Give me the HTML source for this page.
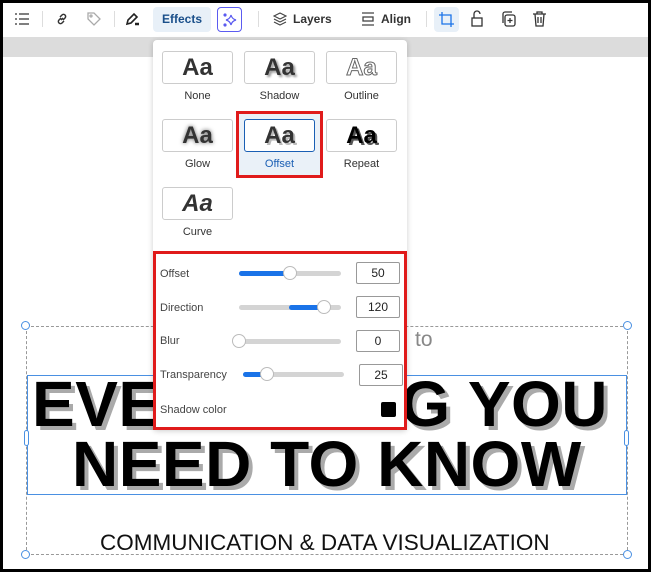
<!DOCTYPE html>
<html><head><style>
*{box-sizing:border-box;margin:0;padding:0}
body{width:651px;height:572px;overflow:hidden;background:#000;font-family:"Liberation Sans",sans-serif;position:relative}
.frame{position:absolute;left:3px;top:3px;width:645px;height:566px;background:#fff;overflow:hidden}
.tb{position:absolute;left:0;top:0;width:645px;height:34px;background:#fff}
.band{position:absolute;left:0;top:34px;width:645px;height:20px;background:#dcdcdc}
.ab{position:absolute}
.sep{position:absolute;top:8px;width:1px;height:16px;background:#ddd}
.tile{position:absolute;width:71px;height:33px;border:1px solid #ccc;border-radius:3px;font-weight:bold;font-size:24px;text-align:center;line-height:31px;color:#333}
.lab{position:absolute;width:71px;text-align:center;font-size:11px;color:#333}
.sl{position:absolute;height:5px;background:#d4d4d4;border-radius:3px}
.fill{position:absolute;height:5px;background:#1a73e8;border-radius:3px}
.knob{position:absolute;width:14px;height:14px;border-radius:50%;background:#fff;border:1px solid #bbb}
.inp{position:absolute;width:44px;height:22px;border:1px solid #999;border-radius:2px;font-size:12px;text-align:center;line-height:20px;color:#222}
.sll{position:absolute;left:7px;font-size:11px;color:#444}
.h{position:absolute;font-weight:900;font-size:64px;color:#000;text-shadow:4px 4px 0 #aaa;letter-spacing:0.5px;white-space:nowrap;font-family:"Liberation Sans",sans-serif}
.hd{position:absolute;width:9px;height:9px;border-radius:50%;border:1.5px solid #4a90e2;background:#fff}
</style></head><body>
<div class="frame">
<div class="tb">
 <svg class="ab" style="left:12px;top:10px" width="14" height="12" viewBox="0 0 14 12" stroke="#555" stroke-width="1.4"><path d="M0 1h2M4 1h10M0 6h2M4 6h10M0 11h2M4 11h10"/></svg>
 <div class="sep" style="left:39px"></div>
 <svg class="ab" style="left:52px;top:9px" width="14" height="14" viewBox="0 0 14 14" fill="none" stroke="#333" stroke-width="1.5"><path d="M6 8l2-2M5 5l2-2a2 2 0 0 1 3 3l-2 2M9 9l-2 2a2 2 0 0 1-3-3l2-2"/></svg>
 <svg class="ab" style="left:83px;top:8px" width="16" height="16" viewBox="0 0 16 16" fill="none" stroke="#aaa" stroke-width="1.3"><path d="M2 2h6l6 6-6 6-6-6z"/><circle cx="5" cy="5" r="1"/></svg>
 <div class="sep" style="left:111px"></div>
 <svg class="ab" style="left:122px;top:9px" width="16" height="14" viewBox="0 0 16 14" fill="none" stroke="#222" stroke-width="1.6"><path d="M2 12l1-4 6-6 3 3-6 6z"/><path d="M10 12h4" stroke-width="2.5"/></svg>
 <div class="ab" style="left:150px;top:4px;width:58px;height:25px;background:#e8f0f8;border-radius:4px;color:#1a4f8a;font-size:12px;font-weight:bold;line-height:25px;text-align:center">Effects</div>
 <div class="ab" style="left:214px;top:4px;width:25px;height:25px;border:1.5px solid #5b5bf0;border-radius:4px"></div>
 <svg class="ab" style="left:219px;top:9px" width="16" height="16" viewBox="0 0 16 16" fill="none" stroke="#5b5bf0" stroke-width="1.2"><path d="M9 3q1 4 5 5q-4 1-5 5q-1-4-5-5q4-1 5-5z"/><circle cx="3" cy="3" r="1" fill="#5b5bf0"/><circle cx="3" cy="13" r="1" fill="#5b5bf0"/></svg>
 <div class="sep" style="left:255px"></div>
 <svg class="ab" style="left:270px;top:9px" width="14" height="14" viewBox="0 0 14 14" fill="none" stroke="#444" stroke-width="1.2"><path d="M7 1l6 3-6 3-6-3z M1 7l6 3 6-3 M1 10l6 3 6-3"/></svg>
 <div class="ab" style="left:290px;top:9px;font-size:12px;color:#333;font-weight:bold">Layers</div>
 <svg class="ab" style="left:358px;top:9px" width="14" height="14" viewBox="0 0 14 14" fill="none" stroke="#444" stroke-width="1.3"><path d="M1 1h12M1 13h12"/><rect x="2" y="5" width="10" height="4"/></svg>
 <div class="ab" style="left:378px;top:9px;font-size:12px;color:#333;font-weight:bold">Align</div>
 <div class="sep" style="left:423px"></div>
 <div class="ab" style="left:431px;top:4px;width:25px;height:25px;background:#e8f0f8;border-radius:4px"></div>
 <svg class="ab" style="left:436px;top:9px" width="15" height="15" viewBox="0 0 15 15" fill="none" stroke="#1a73e8" stroke-width="1.3"><path d="M3 0v12h12M0 3h12v12"/></svg>
 <svg class="ab" style="left:468px;top:7px" width="12" height="17" viewBox="0 0 12 17" fill="none" stroke="#333" stroke-width="1.3"><rect x="1" y="8" width="10" height="8"/><path d="M3 8V4a3 3 0 0 1 6 0"/></svg>
 <svg class="ab" style="left:498px;top:8px" width="15" height="16" viewBox="0 0 15 16" fill="none" stroke="#333" stroke-width="1.3"><rect x="4" y="4" width="10" height="11" rx="2"/><path d="M2 12V3a2 2 0 0 1 2-2h7M9 7v5M6.5 9.5h5"/></svg>
 <svg class="ab" style="left:530px;top:8px" width="13" height="16" viewBox="0 0 13 16" fill="none" stroke="#333" stroke-width="1.3"><path d="M0 3h13M4 3V1h5v2M2 3l1 12h7l1-12M5 6v6M8 6v6"/></svg>
</div>
<div class="band"></div>

<div class="ab" style="left:23px;top:323px;width:602px;height:229px;border:1px dashed #999"></div>
<div class="ab" style="left:24px;top:372px;width:600px;height:120px;border:1px solid #4a90e2"></div>
<div class="hd" style="left:18px;top:318px"></div><div class="hd" style="left:620px;top:318px"></div>
<div class="hd" style="left:18px;top:547px"></div><div class="hd" style="left:620px;top:547px"></div>
<div class="ab" style="left:21px;top:427px;width:5px;height:16px;border:1.5px solid #4a90e2;border-radius:3px;background:#fff"></div>
<div class="ab" style="left:621px;top:427px;width:5px;height:16px;border:1.5px solid #4a90e2;border-radius:3px;background:#fff"></div>
<div class="ab" style="left:412px;top:325px;font-size:21px;color:#888">to</div>
<div class="h" style="left:29px;top:364px">EVERYTHING YOU</div>
<div class="h" style="left:69px;top:424px">NEED TO KNOW</div>
<div class="ab" style="left:97px;top:527px;font-size:22.5px;color:#111">COMMUNICATION &amp; DATA VISUALIZATION</div>

<div class="ab" style="left:150px;top:37px;width:254px;height:390px;background:#fff;border-radius:4px;box-shadow:0 1px 6px rgba(0,0,0,.2)">
 <div class="tile" style="left:9px;top:11px">Aa</div><div class="lab" style="left:9px;top:50px">None</div>
 <div class="tile" style="left:91px;top:11px;text-shadow:2px 2px 2px #999">Aa</div><div class="lab" style="left:91px;top:50px">Shadow</div>
 <div class="tile" style="left:173px;top:11px;color:#fff;-webkit-text-stroke:1px #666">Aa</div><div class="lab" style="left:173px;top:50px">Outline</div>
 <div class="tile" style="left:9px;top:79px;text-shadow:0 0 4px #666">Aa</div><div class="lab" style="left:9px;top:118px">Glow</div>
 <div class="ab" style="left:83px;top:71px;width:87px;height:67px;border:3px solid #e01b1b"></div>
 <div class="ab" style="left:86px;top:74px;width:81px;height:61px;background:#eaf1f8"></div>
 <div class="tile" style="left:91px;top:79px;border-color:#1a5fb4;background:#fff;text-shadow:2px 2px 0 #bbb">Aa</div><div class="lab" style="left:91px;top:118px;color:#1a5fb4">Offset</div>
 <div class="tile" style="left:173px;top:79px;color:#000;text-shadow:2px 2px 0 #555">Aa</div><div class="lab" style="left:173px;top:118px">Repeat</div>
 <div class="tile" style="left:9px;top:147px;font-style:italic">Aa</div><div class="lab" style="left:9px;top:186px">Curve</div>
 <div class="ab" style="left:0;top:211px;width:254px;height:179px;border:3px solid #e01b1b"></div>
 <div class="sll" style="top:228px">Offset</div>
 <div class="sl" style="left:86px;top:231px;width:102px"></div><div class="fill" style="left:86px;top:231px;width:50px"></div><div class="knob" style="left:130px;top:226px"></div>
 <div class="inp" style="left:203px;top:222px">50</div>
 <div class="sll" style="top:262px">Direction</div>
 <div class="sl" style="left:86px;top:265px;width:102px"></div><div class="fill" style="left:136px;top:265px;width:34px"></div><div class="knob" style="left:164px;top:260px"></div>
 <div class="inp" style="left:203px;top:256px">120</div>
 <div class="sll" style="top:295px">Blur</div>
 <div class="sl" style="left:86px;top:299px;width:102px"></div><div class="knob" style="left:79px;top:294px"></div>
 <div class="inp" style="left:203px;top:290px">0</div>
 <div class="sll" style="top:329px">Transparency</div>
 <div class="sl" style="left:90px;top:332px;width:101px"></div><div class="fill" style="left:90px;top:332px;width:22px"></div><div class="knob" style="left:107px;top:327px"></div>
 <div class="inp" style="left:206px;top:324px">25</div>
 <div class="sll" style="top:364px">Shadow color</div>
 <div class="ab" style="left:228px;top:362px;width:15px;height:15px;background:#000;border-radius:2px"></div>
</div>
</div>
</body></html>
